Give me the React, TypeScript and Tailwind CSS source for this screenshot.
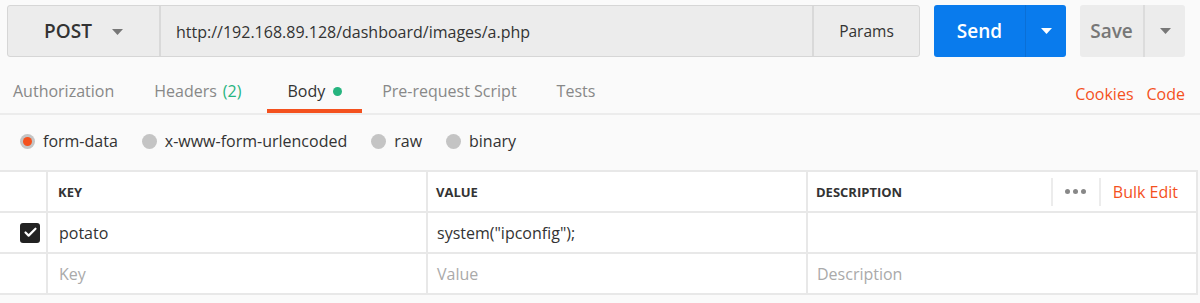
import { Check } from "lucide-react"

function Caret({ color }: { color: string }) {
    return (
        <svg width="11" height="6" viewBox="0 0 11 6">
            <path d="M0 0 L11 0 L5.5 6 Z" fill={color} />
        </svg>
    )
}

function Radio({ label, active }: { label: string; active?: boolean }) {
    return (
        <div className="flex items-center gap-[8px]">
            <span className="w-[15px] h-[15px] rounded-full bg-[#c4c4c4] flex items-center justify-center">
                {active && <span className="w-[9px] h-[9px] rounded-full bg-[#f4511e]" />}
            </span>
            <span className="text-[16px] text-[#333]">{label}</span>
        </div>
    )
}

export default function App() {
    const tabs = [
        { name: "Authorization" },
        { name: "Headers", extra: "(2)" },
        { name: "Body", active: true },
        { name: "Pre-request Script" },
        { name: "Tests" },
    ]

    return (
        <div className="w-[1200px] h-[303px] bg-[#fafafa] overflow-hidden" style={{ fontFamily: '"Open Sans", sans-serif' }}>
            {/* request bar */}
            <div className="flex pt-[5px] pl-[7px] h-[57px]">
                <div className="flex w-[913px] h-[52px] bg-[#ececec] border border-[#d6d6d6] rounded-[3px]">
                    <div className="w-[153px] flex items-center justify-center gap-[20px] border-r-2 border-[#d9d9d9] pt-[1px]">
                        <span className="text-[19px] font-semibold text-[#333]">POST</span>
                        <Caret color="#777" />
                    </div>
                    <div className="flex-1 flex items-center pl-[15px] pt-[1px] text-[16px] text-[#333]">
                        http://192.168.89.128/dashboard/images/a.php
                    </div>
                    <div className="w-[107px] flex items-center justify-center border-l-2 border-[#d9d9d9] pt-[1px] text-[15.5px] text-[#333]">
                        Params
                    </div>
                </div>
                <div className="ml-[14px] flex w-[132px] h-[52px] bg-[#097bed] rounded-[3px]">
                    <div className="w-[92px] flex items-center justify-center border-r border-[#0a6fd6] pt-[1px] text-[19px] font-semibold text-white">
                        Send
                    </div>
                    <div className="flex-1 flex items-center justify-center">
                        <Caret color="#fff" />
                    </div>
                </div>
                <div className="ml-[14px] flex w-[105px] h-[52px] bg-[#ececec] rounded-[3px]">
                    <div className="w-[65px] flex items-center justify-center border-r-2 border-[#dcdcdc] pt-[1px] text-[19px] font-semibold text-[#777]">
                        Save
                    </div>
                    <div className="flex-1 flex items-center justify-center">
                        <Caret color="#777" />
                    </div>
                </div>
            </div>

            {/* tabs */}
            <div className="flex items-end h-[58px] border-b-2 border-[#ececec]">
                <div className="flex h-full">
                    {tabs.map((t, i) => (
                        <div
                            key={t.name}
                            className={`flex items-center h-full pt-[15px] ${i === 0 ? "pl-[13px] pr-[20px]" : "px-[20px]"} ${t.active ? "ml-[6px] border-b-4 border-[#f4511e] pb-0" : "pb-[4px]"}`}
                        >
                            <span className={`text-[16px] ${t.active ? "text-[#333]" : "text-[#888]"}`}>{t.name}</span>
                            {t.extra && <span className="text-[16px] text-[#26b47f] ml-[6px]">{t.extra}</span>}
                            {t.active && <span className="w-[9px] h-[9px] rounded-full bg-[#26b47f] ml-[8px] mt-[1px]" />}
                        </div>
                    ))}
                </div>
                <div className="ml-auto flex items-center h-full pt-[17px] pr-[15px] gap-[13px] text-[16px] text-[#f4511e]">
                    <span>Cookies</span>
                    <span>Code</span>
                </div>
            </div>

            {/* body types */}
            <div className="flex items-center h-[55px] pl-[20px] pb-[3px] gap-[24px]">
                <Radio label="form-data" active />
                <Radio label="x-www-form-urlencoded" />
                <Radio label="raw" />
                <Radio label="binary" />
            </div>

            {/* table */}
            <div className="w-[1198px] border-t-2 border-[#e8e8e8] bg-white">
                <div className="grid grid-cols-[48px_380px_380px_1fr] h-[41px] border-b-2 border-[#e8e8e8]">
                    <div className="bg-white border-r-2 border-[#e8e8e8]" />
                    <div className="flex items-center pl-[10px] pt-[2px] border-r-2 border-[#e8e8e8] text-[13px] font-bold text-[#333]">KEY</div>
                    <div className="flex items-center pl-[8px] pt-[2px] border-r-2 border-[#e8e8e8] text-[13px] font-bold text-[#333]">VALUE</div>
                    <div className="flex items-center pl-[8px] border-r-2 border-[#e8e8e8]">
                        <span className="text-[13px] font-bold text-[#333] pt-[2px]">DESCRIPTION</span>
                        <div className="ml-auto flex items-center h-full">
                            <div className="h-[28px] border-l-2 border-[#ececec] w-[48px] flex items-center justify-center gap-[3px]">
                                <span className="w-[5px] h-[5px] rounded-full bg-[#888]" />
                                <span className="w-[5px] h-[5px] rounded-full bg-[#888]" />
                                <span className="w-[5px] h-[5px] rounded-full bg-[#888]" />
                            </div>
                            <div className="h-[28px] border-l-2 border-[#ececec] flex items-center pl-[12px] pr-[18px] pt-[1px] text-[16px] text-[#f4511e]">
                                Bulk Edit
                            </div>
                        </div>
                    </div>
                </div>
                <div className="grid grid-cols-[48px_380px_380px_1fr] h-[41px] border-b-2 border-[#e8e8e8]">
                    <div className="flex items-center justify-end pr-[6px] border-r-2 border-[#e8e8e8]">
                        <span className="w-[20px] h-[20px] rounded-[3px] bg-[#222] flex items-center justify-center">
                            <Check size={15} strokeWidth={3.5} color="#fff" />
                        </span>
                    </div>
                    <div className="flex items-center pl-[11px] pt-[1px] border-r-2 border-[#e8e8e8] text-[16px] text-[#333]">potato</div>
                    <div className="flex items-center pl-[9px] pt-[1px] border-r-2 border-[#e8e8e8] text-[16px] text-[#333]">system("ipconfig");</div>
                    <div className="border-r-2 border-[#e8e8e8]" />
                </div>
                <div className="grid grid-cols-[48px_380px_380px_1fr] h-[41px] border-b-2 border-[#e8e8e8]">
                    <div className="border-r-2 border-[#e8e8e8]" />
                    <div className="flex items-center pl-[11px] pt-[1px] border-r-2 border-[#e8e8e8] text-[16px] text-[#aaa]">Key</div>
                    <div className="flex items-center pl-[9px] pt-[1px] border-r-2 border-[#e8e8e8] text-[16px] text-[#aaa]">Value</div>
                    <div className="flex items-center pl-[9px] pt-[1px] border-r-2 border-[#e8e8e8] text-[16px] text-[#aaa]">Description</div>
                </div>
            </div>
        </div>
    )
}
